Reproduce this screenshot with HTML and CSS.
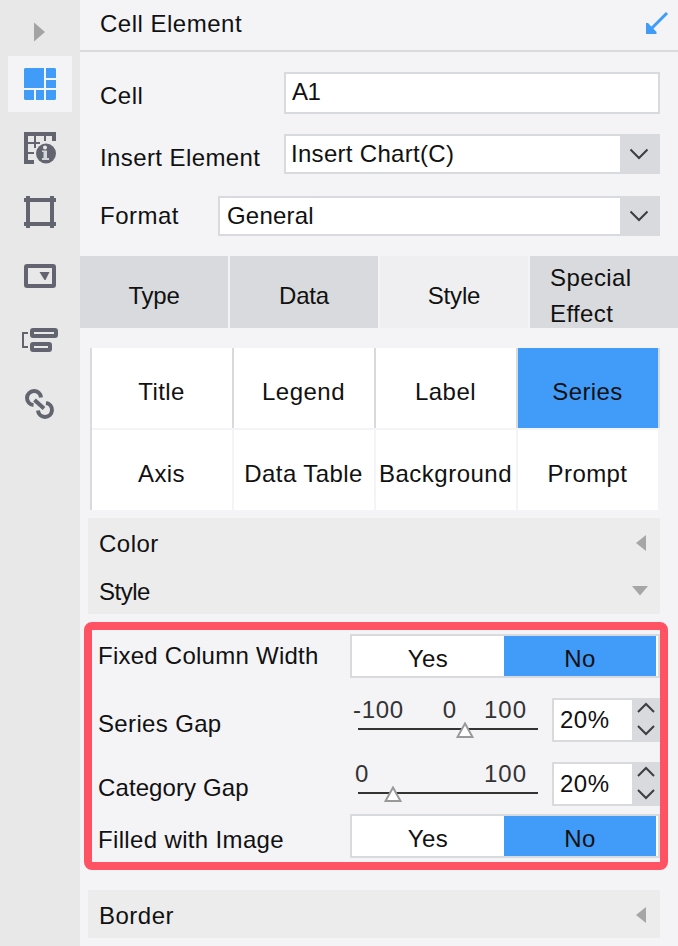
FILE: index.html
```html
<!DOCTYPE html>
<html lang="en">
<head>
<meta charset="utf-8">
<title>Cell Element</title>
<link rel="stylesheet" href="styles.css">
</head>
<body>
<div class="app">
  <nav class="rail">
    <div class="rail-item rail-toggle"><svg width="32" height="32" viewBox="0 0 32 32"><path d="M10 6.500v19L21 16z" fill="#a3a3a3"/></svg></div>
    <div class="rail-item active"><svg width="32" height="32" viewBox="0 0 32 32" fill="#419bf9"><path d="M1 0h19v20H0V1zM22 0h9l1 1v9H22zM22 12h10v8H22zM0 22h10v10H1l-1-1zM12 22h8v10h-8zM22 22h10v9l-1 1h-9z"/></svg></div>
    <div class="rail-item"><svg width="32" height="32" viewBox="0 0 32 32"><g fill="none" stroke="#62656f"><path d="M32 2H2v28h8M30 2v7" stroke-width="4"/><path d="M11 4v12M21 4v5M4 11h12M4 21h6" stroke-width="2"/></g><circle cx="22" cy="21.500" r="11" fill="#e8e8e8"/><circle cx="22" cy="21.500" r="10" fill="#62656f"/><circle cx="21" cy="15.500" r="2" fill="#e8e8e8"/><path d="M18 18.500h5V26h2v2h-7v-2h1.500v-6H18z" fill="#d4d5d8"/></svg></div>
    <div class="rail-item"><svg width="32" height="32" viewBox="0 0 32 32" fill="none" stroke="#62656f"><path d="M4 0v32M28 0v32M0 4h32M0 28h32" stroke-width="4"/></svg></div>
    <div class="rail-item"><svg width="32" height="32" viewBox="0 0 32 32"><rect x="2" y="6" width="28" height="20" rx="1" fill="none" stroke="#62656f" stroke-width="4"/><path d="M15.500 12h10L21.500 20h-1z" fill="#62656f"/></svg></div>
    <div class="rail-item"><svg width="36" height="32" viewBox="0 0 36 32" fill="none" stroke="#62656f"><path d="M6 9H1v14h5" stroke-width="2"/><rect x="10" y="6" width="24" height="6" rx="1" stroke-width="4"/><rect x="10" y="20" width="18" height="6" rx="1" stroke-width="4"/></svg></div>
    <div class="rail-item"><svg width="32" height="32" viewBox="0 0 32 32" fill="none" stroke="#62656f" stroke-width="4"><path d="M9.500 17A7 7 0 1 1 17 9.500M14 22.500A7 7 0 1 0 22 15M10.500 12L20 20.500"/></svg></div>
  </nav>
  <main class="panel">
    <header class="head"><h1>Cell Element</h1>
      <svg width="24" height="24" viewBox="0 0 24 24"><path d="M22 3L7 18" stroke="#419bf9" stroke-width="3"/><path d="M1 13h2l8.500 9v2H1z" fill="#419bf9"/></svg>
    </header>
    <section class="fields">
      <div class="field cell-row"><label>Cell</label><div class="input">A1</div></div>
      <div class="field"><label class="insert">Insert Element</label><div class="input select tight">Insert Chart(C)<i><svg width="20" height="12" viewBox="0 0 20 12"><path d="M1.500 1.500L10 10l8.500-8.500"/></svg></i></div></div>
      <div class="field format-row"><label>Format</label><div class="input select">General<i><svg width="20" height="12" viewBox="0 0 20 12"><path d="M1.500 1.500L10 10l8.500-8.500"/></svg></i></div></div>
    </section>
    <div class="tabs"><div class="tab">Type</div><div class="tab">Data</div><div class="tab current">Style</div><div class="tab two">Special<br>Effect</div></div>
    <div class="grid">
      <div>Title</div><div class="wide">Legend</div><div class="wide">Label</div><div class="on">Series</div>
      <div>Axis</div><div>Data Table</div><div class="wide">Background</div><div>Prompt</div>
    </div>
    <div class="group">Color<svg width="16" height="16" viewBox="0 0 16 16"><path d="M14 0v16L4 8z"/></svg></div>
    <div class="group style">Style<svg width="16" height="16" viewBox="0 0 16 16"><path d="M0 3h16L8 12.500z"/></svg></div>
    <section class="options">
      <div class="opt"><span class="name fixed">Fixed Column Width</span><div class="toggle"><span>Yes</span><span class="on">No</span></div></div>
      <div class="opt series"><span class="name">Series Gap</span>
        <div class="slider"><div class="marks"><span class="min">-100</span><span class="mid">0</span><span class="max">100</span></div><div class="track"><svg class="thumb t-series" width="18" height="16" viewBox="0 0 18 16"><path d="M9 1.500L16.500 15h-15z"/></svg></div></div>
        <div class="spin"><span>20%</span><i><svg width="18" height="36" viewBox="0 0 18 36"><path d="M1 10l8-8 8 8M1 24l8 8 8-8"/></svg></i></div></div>
      <div class="opt category"><span class="name">Category Gap</span>
        <div class="slider"><div class="marks"><span class="zero">0</span><span class="max">100</span></div><div class="track"><svg class="thumb t-category" width="18" height="16" viewBox="0 0 18 16"><path d="M9 1.500L16.500 15h-15z"/></svg></div></div>
        <div class="spin"><span>20%</span><i><svg width="18" height="36" viewBox="0 0 18 36"><path d="M1 10l8-8 8 8M1 24l8 8 8-8"/></svg></i></div></div>
      <div class="opt filled"><span class="name">Filled with Image</span><div class="toggle"><span>Yes</span><span class="on">No</span></div></div>
    </section>
    <div class="group">Border<svg width="16" height="16" viewBox="0 0 16 16"><path d="M14 0v16L4 8z"/></svg></div>
  </main>
</div>
</body>
</html>
```

FILE: styles.css
```css
* { box-sizing: border-box; }
body { margin: 0; background: #f4f4f7; color: #111; font: 24px/28px "Liberation Sans", Arial, sans-serif; letter-spacing: .5px; }
svg { display: block; flex: none; }
.app { display: flex; width: 678px; height: 946px; overflow: hidden; }
.rail { width: 80px; background: #e8e8e8; padding: 0 8px; display: flex; flex-direction: column; gap: 8px; }
.rail-item { height: 56px; display: flex; align-items: center; justify-content: center; }
.rail-toggle { height: 48px; padding-top: 16px; }
.rail-item.active { background: #f4f4f7; }
.panel { width: 598px; }
.head { height: 52px; border-bottom: 2px solid #d9dadd; display: flex; justify-content: space-between; padding: 10px 9px 0 20px; }
.head h1 { margin: 0; font-size: 24px; font-weight: 400; }
.fields { padding: 20px 18px 0 20px; display: flex; flex-direction: column; gap: 20px; height: 204px; }
.field { display: flex; justify-content: space-between; }
.field label { padding-top: 10px; }
.field .insert { letter-spacing: .4px; }
.input { width: 376px; height: 40px; border: 2px solid #d9dadd; background: #fff; padding: 4px 0 0 6px; display: flex; justify-content: space-between; letter-spacing: 0; }
.input.tight { padding-left: 5px; letter-spacing: .3px; }
.cell-row .input { height: 42px; letter-spacing: -.5px; }
.field.format-row { margin-top: 2px; }
.format-row label { padding-top: 6px; }
.format-row .input { width: 442px; padding-left: 7px; letter-spacing: .2px; }
.select i { width: 38px; height: 38px; background: #d9dadd; margin-top: -5px; display: flex; align-items: center; justify-content: center; }
.select path, .spin path { fill: none; stroke: #3d3d3f; stroke-width: 2; }
.tabs { display: grid; grid-template-columns: repeat(4, 148px); grid-template-rows: 72px; gap: 2px; height: 72px; letter-spacing: -.2px; }
.tab { background: #d9dadd; padding-top: 26px; text-align: center; }
.tab.current { background: #efeff1; }
.tab.two { line-height: 36px; padding: 4px 0 0 20px; text-align: left; letter-spacing: .4px; }
.grid { margin: 20px 18px 8px 10px; width: 570px; display: grid; grid-template-columns: repeat(4, 140px); grid-template-rows: 80px 80px; gap: 2px; padding: 0 2px; background: linear-gradient(#d9dadd, #d9dadd) 0 0/2px 100% no-repeat; letter-spacing: .4px; }
.grid div { background: #fff; padding: 30px 1px 0 0; text-align: center; white-space: nowrap; }
.grid .wide { letter-spacing: .5px; }
.grid .on { background: #419bf9; }
.grid div:nth-child(-n+4) { box-shadow: 2px 0 #d9dadd; }
.group { margin: 0 18px 0 8px; height: 48px; background: #ececec; padding: 12px 12px 0 11px; display: flex; justify-content: space-between; }
.group.style { letter-spacing: -.5px; }
.group svg { margin-top: 5px; fill: #a6a6a6; }
.options { margin: 8px 10px 20px 4px; width: 584px; height: 248px; border: 8px solid #ff5263; border-radius: 8px; padding: 4px 0; }
.opt { display: flex; height: 44px; }
.name { width: 258px; padding: 8px 0 0 6px; white-space: nowrap; letter-spacing: .35px; }
.name.fixed { letter-spacing: .25px; }
.category .name { letter-spacing: .1px; }
.toggle { width: 310px; border: 2px solid #d9dadd; background: #fff; display: flex; letter-spacing: .4px; }
.toggle span { width: 152px; padding-top: 9px; text-align: center; }
.on { background: #419bf9; }
.opt.series, .opt.category { margin-top: 20px; }
.series .name, .category .name { padding-top: 12px; }
.opt.filled { margin-top: 8px; }
.filled .name { padding-top: 12px; }
.slider { width: 202px; padding: 0 14px 0 3px; color: #333; }
.marks { display: flex; height: 30px; padding-right: 11px; letter-spacing: 1px; margin-top: -2px; }
.min { letter-spacing: .7px; }
.mid { margin-left: 39px; }
.zero { margin-left: 2px; }
.max { margin-left: auto; }
.track { position: relative; height: 2px; margin: 2px 0 0 5px; width: 180px; background: #333; }
.thumb { position: absolute; top: -6px; fill: #fff; stroke: #999; stroke-width: 2; }
.t-series { left: 98px; }
.t-category { left: 26px; }
.spin { width: 108px; border: 2px solid #d9dadd; border-right: 0; display: flex; letter-spacing: .5px; background: #fff; }
.spin span { width: 78px; padding: 6px 0 0 6px; }
.spin i { width: 28px; background: #d9dadd; display: flex; align-items: center; justify-content: center; }
```
